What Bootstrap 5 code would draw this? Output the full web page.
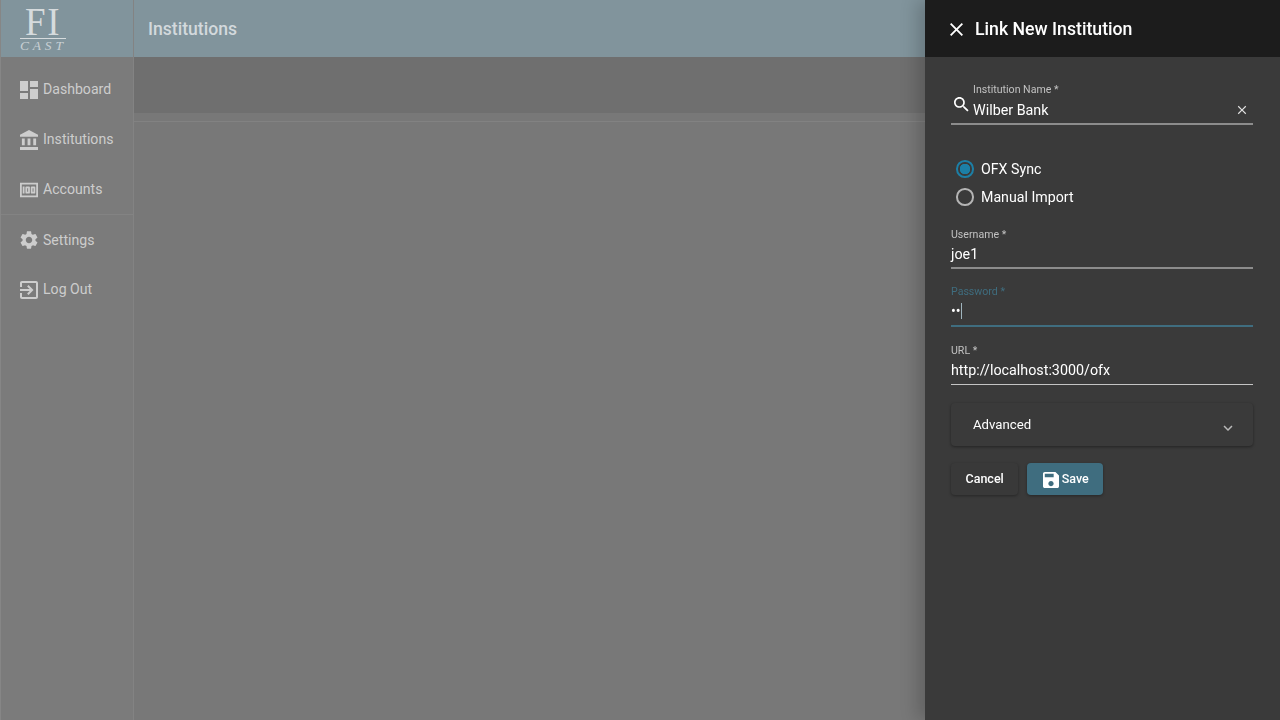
<!DOCTYPE html>
<html lang="en">
<head>
  <meta charset="UTF-8">
  <meta name="viewport" content="width=device-width, initial-scale=1.0">
  <title>Institutions</title>
  <link href="https://cdn.jsdelivr.net/npm/bootstrap@5.3.0/dist/css/bootstrap.min.css" rel="stylesheet">
  <style>
    html, body {
      height: 720px;
      overflow: hidden;
    }
    body {
      font-family: Roboto, "Liberation Sans", sans-serif;
      background-color: #787878;
    }
    svg {
      fill: currentColor;
      flex-shrink: 0;
    }
    #app {
      height: 720px;
    }
    #sidebar {
      width: 134px;
      background-color: #7b7b7b;
      border-left: 1px solid #868686;
      border-right: 1px solid #838383;
    }
    #logo {
      height: 57px;
      padding-left: 19px;
      background-color: #81949c;
      color: #d6dbdd;
      font-family: "Liberation Serif", serif;
    }
    #logo .fi {
      font-size: 41px;
      line-height: 33px;
      padding-top: 5px;
      width: 46px;
      border-bottom: 1px solid #d6dbdd;
      text-align: center;
    }
    #logo .fi span {
      display: inline-block;
      transform: scaleX(.9);
      letter-spacing: 2px;
    }
    #logo .cast {
      font-size: 13.5px;
      line-height: 13px;
      font-style: italic;
      letter-spacing: 3.8px;
      white-space: nowrap;
      color: #c8d0d4;
    }
    .side-item {
      height: 50px;
      padding-left: 19px;
      color: #cdcdcd;
      font-size: 14.1px;
      gap: 5px;
    }
    .side-item svg {
      margin-bottom: 1px;
    }
    .side-sep {
      height: 51px;
      margin-top: -1px;
      padding-top: 1px;
      border-top: 1px solid #838383;
    }
    #topbar {
      height: 57px;
      background-color: #81949c;
      color: #d3d9dc;
      font-size: 17.6px;
      font-weight: 500;
      padding: 1px 0 0 14px;
    }
    #band {
      height: 56px;
      background-color: #6f6f6f;
    }
    #rule {
      margin-top: 8px;
      border-top: 1px solid #828282;
    }
    #drawer {
      width: 355px;
      background-color: #3a3a3a;
      color: #fff;
      border: 0;
      box-shadow: -8px 0 16px rgba(0, 0, 0, .18);
    }
    #drawer .offcanvas-header {
      height: 57px;
      background-color: #1c1c1c;
      padding: 2px 0 0 25px;
      justify-content: flex-start;
      gap: 12px;
      font-size: 17.7px;
      font-weight: 500;
    }
    #drawer .offcanvas-body {
      padding: 26px 27px 0 26px;
      overflow: hidden;
    }
    .field {
      border-bottom: 1px solid #c4c4c4;
    }
    .field label {
      display: block;
      font-size: 10.6px;
      line-height: 14px;
      margin-bottom: 2px;
      color: #c2c2c2;
    }
    .field .value {
      font-size: 14.3px;
      line-height: 20px;
      padding-bottom: 4px;
    }
    .field.thick {
      border-bottom: 2px solid #8c8c8c;
    }
    .field.focus {
      border-bottom: 2px solid #3f6d7f;
    }
    .field.focus label {
      color: #3f6d7f;
    }
    #nameField label {
      margin-bottom: 3px;
    }
    #nameField .value, #userField .value {
      padding-bottom: 3px;
    }
    #searchIcon {
      margin: 2px 4px 0 3px;
    }
    #clearIcon {
      margin: 14px 5px 0 0;
      color: #e2e2e2;
    }
    .caret-bar {
      display: inline-block;
      width: 1px;
      height: 16px;
      background-color: #9fb4bd;
      vertical-align: -3px;
    }
    #radios {
      margin-top: 31px;
    }
    .radio-row {
      height: 28px;
      font-size: 14.2px;
      padding-left: 5px;
      gap: 7.5px;
    }
    .radio-dot {
      width: 17.5px;
      height: 17.5px;
      margin-bottom: 2px;
      border: 2px solid #b5b5b5;
      border-radius: 50%;
    }
    .radio-dot.on {
      border-color: #1c7fa6;
      background: radial-gradient(circle, #1c7fa6 0 5px, transparent 5.5px);
    }
    #passField {
      margin-top: 16px;
    }
    #urlField {
      margin-top: 17px;
    }
    #advanced {
      height: 43px;
      margin-top: 18px;
      padding: 0 16px 0 22px;
      background-color: #3a3a3a;
      font-size: 13.2px;
      border: 0;
      border-radius: 4px;
      box-shadow: 0 1px 3px rgba(0, 0, 0, .4);
    }
    #advanced svg {
      color: #b9b9b9;
      margin-top: 6px;
    }
    #actions {
      margin-top: 17px;
      gap: 9px;
    }
    .btn-cancel, .btn-save {
      height: 32px;
      padding: 0 14.5px;
      font-size: 12.5px;
      font-weight: 500;
      color: #fff;
      border: 0;
      border-radius: 4px;
      box-shadow: 0 1px 3px rgba(0, 0, 0, .35);
    }
    .btn-cancel {
      background-color: #393939;
    }
    .btn-save {
      width: 76px;
      background-color: #3f6d7f;
      gap: 3px;
      padding: 0 0 0 1px;
    }
    .btn-save svg {
      margin-top: 2px;
    }
    .btn-save:hover {
      background-color: #3f6d7f;
      color: #fff;
    }
  </style>
</head>
<body>
  <div id="app" class="d-flex">
    <div id="sidebar" class="d-flex flex-column">
      <div id="logo">
        <div class="fi"><span>FI</span></div>
        <div class="cast">CAST</div>
      </div>
      <div class="side-item d-flex align-items-center mt-2">
        <svg width="18" height="18" viewBox="3 3 18 18"><path d="M3 13h8V3H3v10zm0 8h8v-6H3v6zm10 0h8V11h-8v10zm0-18v6h8V3h-8z"/></svg>
        Dashboard
      </div>
      <div class="side-item d-flex align-items-center">
        <svg width="18" height="20" viewBox="2 1 19 21"><path d="M4 10v7h3v-7H4zm6 0v7h3v-7h-3zM2 22h19v-3H2v3zm14-12v7h3v-7h-3zm-4.500-9L2 6v2h19V6l-9.500-5z"/></svg>
        Institutions
      </div>
      <div class="side-item d-flex align-items-center">
        <svg width="18" height="18" viewBox="2 2 20 20"><path d="M5 8h2v8H5zm7 0H9c-.55 0-1 .45-1 1v6c0 .55.45 1 1 1h3c.55 0 1-.45 1-1V9c0-.55-.45-1-1-1zm-1 6h-1v-4h1v4zm7-6h-3c-.55 0-1 .45-1 1v6c0 .55.45 1 1 1h3c.55 0 1-.45 1-1V9c0-.55-.45-1-1-1zm-1 6h-1v-4h1v4z"/><path d="M2 4v16h20V4H2zm2 14V6h16v12H4z"/></svg>
        Accounts
      </div>
      <div class="side-item side-sep d-flex align-items-center">
        <svg width="18" height="18" viewBox="2.500 2 19 20"><path d="M19.140 12.940c.04-.3.06-.61.06-.94 0-.32-.02-.64-.07-.94l2.030-1.580c.18-.14.23-.41.12-.61l-1.920-3.320c-.12-.22-.37-.29-.59-.22l-2.390.96c-.5-.38-1.030-.7-1.620-.94l-.36-2.540c-.04-.24-.24-.41-.48-.41h-3.840c-.24 0-.43.17-.47.41l-.36 2.540c-.59.24-1.130.57-1.620.94l-2.390-.96c-.22-.08-.47 0-.59.22L2.740 8.870c-.12.21-.08.47.12.61l2.030 1.580c-.05.3-.09.63-.09.94s.02.64.07.94l-2.030 1.580c-.18.14-.23.41-.12.61l1.920 3.320c.12.22.37.29.59.22l2.390-.96c.5.38 1.030.7 1.620.94l.36 2.540c.05.24.24.41.48.41h3.840c.24 0 .44-.17.47-.41l.36-2.540c.59-.24 1.130-.56 1.620-.94l2.390.96c.22.08.47 0 .59-.22l1.920-3.320c.12-.22.07-.47-.12-.61l-2.010-1.580zM12 15.600c-1.980 0-3.600-1.620-3.600-3.600s1.620-3.600 3.600-3.600 3.600 1.620 3.600 3.600-1.620 3.600-3.600 3.600z"/></svg>
        Settings
      </div>
      <div class="side-item d-flex align-items-center">
        <svg width="18" height="18" viewBox="3 3 18 18"><path d="M10.090 15.590L11.500 17l5-5-5-5-1.410 1.410L12.670 11H3v2h9.670l-2.580 2.590zM19 3H5c-1.110 0-2 .9-2 2v4h2V5h14v14H5v-4H3v4c0 1.100.89 2 2 2h14c1.100 0 2-.9 2-2V5c0-1.100-.9-2-2-2z"/></svg>
        Log Out
      </div>
    </div>
    <div class="flex-grow-1">
      <div id="topbar" class="d-flex align-items-center">Institutions</div>
      <div id="band"></div>
      <div id="rule"></div>
    </div>
  </div>

  <div id="drawer" class="offcanvas offcanvas-end show" data-bs-backdrop="false" data-bs-scroll="true">
    <div class="offcanvas-header">
      <svg width="13" height="13" viewBox="5 5 14 14"><path d="M19 6.410L17.590 5 12 10.590 6.410 5 5 6.410 10.590 12 5 17.590 6.410 19 12 13.410 17.590 19 19 17.590 13.410 12z"/></svg>
      Link New Institution
    </div>
    <div class="offcanvas-body">
      <div id="nameField" class="field thick d-flex align-items-center">
        <svg id="searchIcon" width="15" height="15" viewBox="3 3 18 18"><path d="M15.500 14h-.79l-.28-.27C15.410 12.590 16 11.110 16 9.500 16 5.910 13.090 3 9.500 3S3 5.910 3 9.500 5.910 16 9.500 16c1.610 0 3.090-.59 4.230-1.570l.27.28v.79l5 4.990L20.490 19l-4.990-5zm-6 0C7.010 14 5 11.990 5 9.500S7.010 5 9.500 5 14 7.010 14 9.500 11.990 14 9.500 14z"/></svg>
        <div class="flex-grow-1">
          <label>Institution Name *</label>
          <div class="value">Wilber Bank</div>
        </div>
        <svg id="clearIcon" width="12" height="12" viewBox="2 2 20 20"><path d="M19 6.410L17.590 5 12 10.590 6.410 5 5 6.410 10.590 12 5 17.590 6.410 19 12 13.410 17.590 19 19 17.590 13.410 12z"/></svg>
      </div>

      <div id="radios">
        <div class="radio-row d-flex align-items-center"><span class="radio-dot on"></span>OFX Sync</div>
        <div class="radio-row d-flex align-items-center"><span class="radio-dot"></span>Manual Import</div>
      </div>

      <div id="userField" class="field thick mt-3">
        <label>Username *</label>
        <div class="value">joe1</div>
      </div>
      <div id="passField" class="field focus">
        <label>Password *</label>
        <div class="value">••<span class="caret-bar"></span></div>
      </div>
      <div id="urlField" class="field">
        <label>URL *</label>
        <div class="value">http://localhost:3000/ofx</div>
      </div>

      <div id="advanced" class="d-flex align-items-center justify-content-between">
        Advanced
        <svg width="18" height="18" viewBox="0 0 24 24"><path d="M16.590 8.590L12 13.170 7.410 8.590 6 10l6 6 6-6z"/></svg>
      </div>

      <div id="actions" class="d-flex">
        <button type="button" class="btn btn-cancel">Cancel</button>
        <button type="button" class="btn btn-save d-flex align-items-center justify-content-center">
          <svg width="16" height="16" viewBox="3 3 18 18"><path d="M17 3H5c-1.110 0-2 .9-2 2v14c0 1.100.89 2 2 2h14c1.100 0 2-.9 2-2V7l-4-4zm-5 16c-1.660 0-3-1.340-3-3s1.340-3 3-3 3 1.340 3 3-1.340 3-3 3zm3-10H5V5h10v4z"/></svg>
          Save
        </button>
      </div>
    </div>
  </div>
  <script src="https://cdn.jsdelivr.net/npm/bootstrap@5.3.0/dist/js/bootstrap.bundle.min.js"></script>
</body>
</html>
